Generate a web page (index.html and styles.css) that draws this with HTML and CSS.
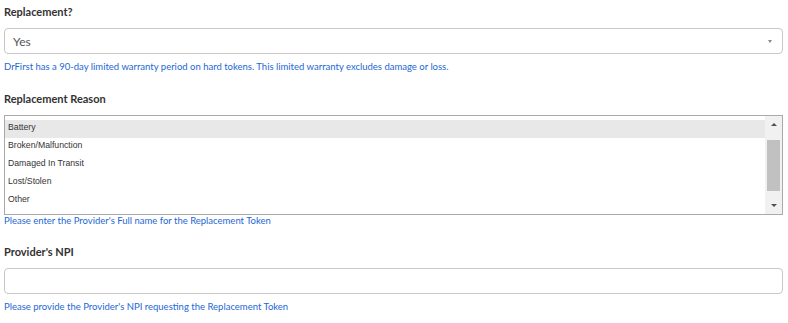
FILE: index.html
```html
<!DOCTYPE html>
<html lang="en">
<head>
  <meta charset="UTF-8" />
  <meta name="viewport" content="width=device-width, initial-scale=1.0"/>
  <title>Replacement Token</title>
  <link rel="stylesheet" href="styles.css">
</head>
<body>
  <div class="form">
    <div class="field">
      <label class="label">Replacement?</label>
      <div class="select">
        <span class="select-value">Yes</span>
        <span class="select-arrow"></span>
      </div>
      <div class="help">DrFirst has a 90-day limited warranty period on hard tokens. This limited warranty excludes damage or loss.</div>
    </div>

    <div class="field">
      <label class="label">Replacement Reason</label>
      <div class="listbox">
        <div class="options">
          <div class="option selected">Battery</div>
          <div class="option">Broken/Malfunction</div>
          <div class="option">Damaged In Transit</div>
          <div class="option">Lost/Stolen</div>
          <div class="option">Other</div>
        </div>
        <div class="scrollbar">
          <div class="sb-btn"><span class="tri-up"></span></div>
          <div class="sb-track"><div class="sb-thumb"></div></div>
          <div class="sb-btn"><span class="tri-down"></span></div>
        </div>
      </div>
      <div class="help tight">Please enter the Provider's Full name for the Replacement Token</div>
    </div>

    <div class="field">
      <label class="label">Provider's NPI</label>
      <input class="input" type="text" />
      <div class="help">Please provide the Provider's NPI requesting the Replacement Token</div>
    </div>
  </div>
</body>
</html>
```

FILE: styles.css
```css
body {
  margin: 0;
  padding: 0;
  background: #fff;
  font-family: Lato, 'Open Sans', sans-serif;
  color: #2d2d2d;
}
.form {
  padding: 3px 5px 0 4px;
}
.field + .field {
  margin-top: 16px;
}
.label {
  display: block;
  font-size: 11px;
  font-weight: bold;
  line-height: 17px;
  margin-bottom: 8px;
  color: #333;
}
.select {
  height: 26px;
  box-sizing: border-box;
  border: 1px solid #c8c8c8;
  border-radius: 4px;
  display: flex;
  align-items: center;
  justify-content: space-between;
  padding: 0 10px 0 8px;
}
.select-value {
  font-size: 12px;
  color: #555;
}
.select-arrow {
  width: 0;
  height: 0;
  border-style: solid;
  border-width: 3px 2px 0 2px;
  border-color: #888 transparent transparent transparent;
}
.help {
  font-size: 9.5px;
  line-height: 14px;
  margin-top: 6px;
  color: #1d68d4;
}
.help.tight {
  margin-top: 0;
  line-height: 12px;
}
.listbox {
  height: 100px;
  box-sizing: border-box;
  border: 1px solid #aaa;
  display: flex;
}
.options {
  flex: 1;
  padding: 4px 0;
}
.option {
  height: 18px;
  box-sizing: border-box;
  padding-left: 3px;
  font-family: 'Liberation Sans', Arial, sans-serif;
  font-size: 8.7px;
  line-height: 14px;
  color: #333;
}
.option.selected {
  background: #e8e8e8;
}
.scrollbar {
  width: 17px;
  background: #f1f1f1;
  display: flex;
  flex-direction: column;
}
.sb-btn {
  height: 17px;
  display: flex;
  align-items: center;
  justify-content: center;
}
.tri-up, .tri-down {
  width: 0;
  height: 0;
  border-style: solid;
}
.tri-up {
  border-width: 0 3px 3px 3px;
  border-color: transparent transparent #505050 transparent;
}
.tri-down {
  border-width: 3px 3px 0 3px;
  border-color: #505050 transparent transparent transparent;
}
.sb-track {
  flex: 1;
  padding-top: 7px;
}
.sb-thumb {
  height: 51px;
  margin: 0 2px;
  background: #c1c1c1;
}
.input {
  display: block;
  width: 100%;
  height: 26px;
  box-sizing: border-box;
  border: 1px solid #c8c8c8;
  border-radius: 4px;
  margin: 0;
  padding: 0 8px;
  font-family: Lato, sans-serif;
  font-size: 12px;
}
```
